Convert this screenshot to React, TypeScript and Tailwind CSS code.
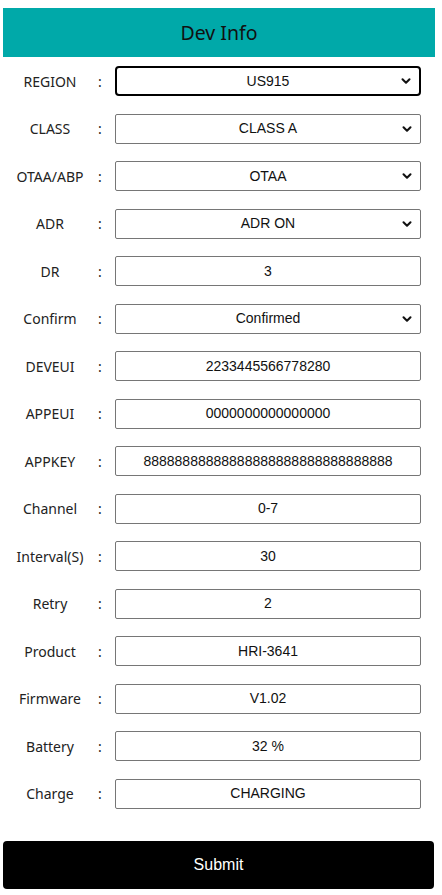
import { ChevronDown } from 'lucide-react'

type Field = { label: string; value: string; select?: boolean; focus?: boolean }

const fields: Field[] = [
  { label: 'REGION', value: 'US915', select: true, focus: true },
  { label: 'CLASS', value: 'CLASS A', select: true },
  { label: 'OTAA/ABP', value: 'OTAA', select: true },
  { label: 'ADR', value: 'ADR ON', select: true },
  { label: 'DR', value: '3' },
  { label: 'Confirm', value: 'Confirmed', select: true },
  { label: 'DEVEUI', value: '2233445566778280' },
  { label: 'APPEUI', value: '0000000000000000' },
  { label: 'APPKEY', value: '88888888888888888888888888888888' },
  { label: 'Channel', value: '0-7' },
  { label: 'Interval(S)', value: '30' },
  { label: 'Retry', value: '2' },
  { label: 'Product', value: 'HRI-3641' },
  { label: 'Firmware', value: 'V1.02' },
  { label: 'Battery', value: '32 %' },
  { label: 'Charge', value: 'CHARGING' },
]

function Row({ field }: { field: Field }) {
  const box = field.focus
    ? 'border-2 border-black rounded-[4px]'
    : 'border border-[#767676] rounded-[2px]'
  return (
    <div className="flex items-center h-[30px]">
      <div className="w-[84px] ml-[8px] text-center text-[14px] text-[#222] font-['Noto_Sans',sans-serif]">
        {field.label}
      </div>
      <div className="w-[16px] text-center text-[14px] text-[#222] font-['Noto_Sans',sans-serif]">:</div>
      <div
        className={`relative ml-[7px] w-[306px] h-[30px] flex items-center justify-center bg-white ${box} font-['Liberation_Sans',Arial,sans-serif] text-[14px] text-[#111]`}
      >
        <span>{field.value}</span>
        {field.select && (
          <ChevronDown className="absolute right-[6px] top-1/2 -translate-y-1/2 w-[14px] h-[14px]" strokeWidth={3.5} />
        )}
      </div>
    </div>
  )
}

export default function App() {
  return (
    <div className="w-[442px] min-h-[895px] bg-white pt-[8px]">
      <div className="ml-[3px] w-[432px] h-[49px] bg-[#00a9a9] flex items-center justify-center">
        <span className="text-[19.5px] text-[#111] font-['Noto_Sans',sans-serif]">Dev Info</span>
      </div>
      <div className="flex flex-col gap-[17.5px] pt-[9px]">
        {fields.map((f) => (
          <Row key={f.label} field={f} />
        ))}
      </div>
      <button className="mt-[32px] ml-[3px] w-[431px] h-[48px] bg-black text-white rounded-[4px] text-[16px] font-['Liberation_Sans',Arial,sans-serif]">
        Submit
      </button>
    </div>
  )
}
